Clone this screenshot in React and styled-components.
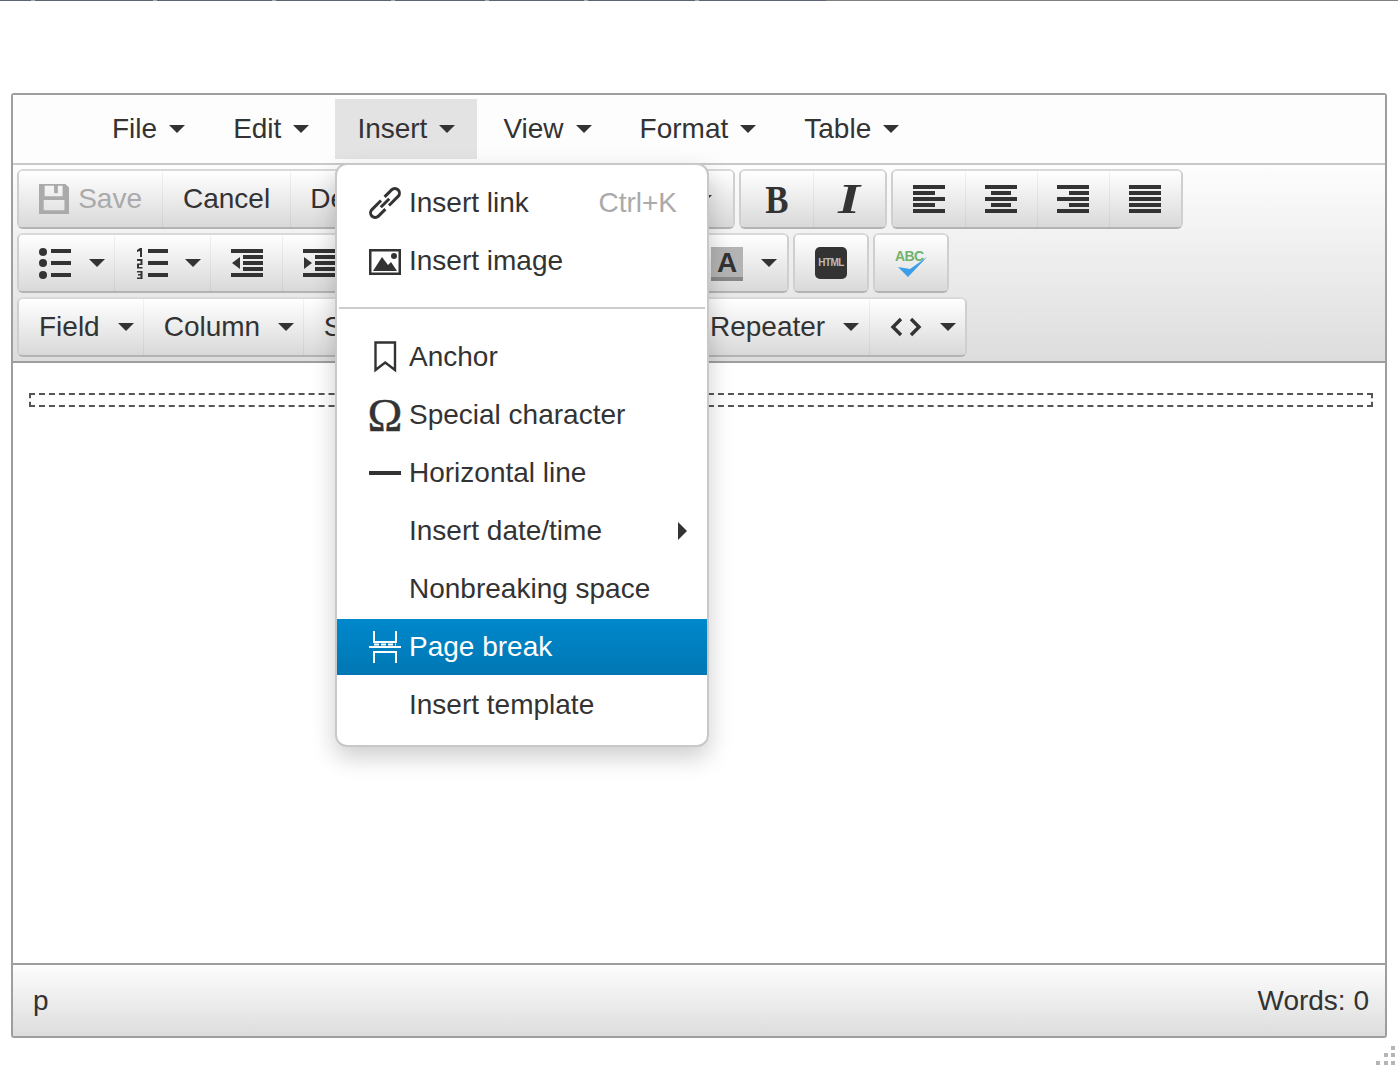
import React from "react";
import styled, { createGlobalStyle } from "styled-components";

const GlobalStyle = createGlobalStyle`
html, body {
  margin: 0;
  height: 100%;
  overflow: hidden;
  background: #fff;
}
body {
  font-family: "Liberation Sans", Arial, sans-serif;
  color: #333;
}
`;

const TopLine = styled.div`
height: 1px;
background: linear-gradient(
  to right,
  #5b6573 31px, #a9adb3 31px, #a9adb3 35px,
  #5b6573 35px, #5b6573 153px, #a9adb3 153px, #a9adb3 157px,
  #5b6573 157px, #5b6573 272px, #a9adb3 272px, #a9adb3 276px,
  #5b6573 276px, #5b6573 391px, #a9adb3 391px, #a9adb3 395px,
  #5b6573 395px, #5b6573 485px, #a9adb3 485px, #a9adb3 489px,
  #5b6573 489px, #5b6573 584px, #a9adb3 584px, #a9adb3 588px,
  #5b6573 588px, #5b6573 695px, #a9adb3 695px, #a9adb3 699px,
  #5b6573 699px, #5b6573 826px, #80807c 826px
);
`;

const Page = styled.div`
padding: 92px 11px 0;
`;

const Editor = styled.div`
position: relative;
display: flex;
flex-direction: column;
width: 1376px;
height: 945px;
box-sizing: border-box;
border: 2px solid #9e9e9e;
border-radius: 3px;
font-size: 28px;
line-height: 32px;
`;

const MenuBar = styled.div`
display: flex;
gap: 4px;
height: 60px;
padding: 4px 0 4px 77px;
background: #fdfdfd;
border-bottom: 2px solid #c9c9c9;
`;

const MenuButton = styled.div`
display: flex;
align-items: center;
gap: 12px;
padding: 0 22px;
background: ${(p) => (p.$active ? "#e3e3e3" : "transparent")};
`;

const Caret = styled.span`
flex: none;
width: 0;
height: 0;
border-style: solid;
border-width: 8px 8px 0;
border-color: #333 transparent transparent;
`;

const Toolbar = styled.div`
display: flex;
flex-direction: column;
gap: 4px;
height: 188px;
padding: 4px;
background: linear-gradient(to bottom, #fdfdfd, #dddddd);
border-bottom: 2px solid #9e9e9e;
`;

const Row = styled.div`
display: flex;
gap: 4px;
height: 60px;
`;

const Group = styled.div`
display: flex;
box-sizing: border-box;
width: ${(p) => (p.$width ? `${p.$width}px` : "auto")};
height: 60px;
border: 2px solid;
border-color: #d9d9d9 #cfcfcf #b3b3b3;
border-radius: 6px;
overflow: hidden;
`;

const Btn = styled.div`
display: flex;
flex: ${(p) => (p.$fill ? "1" : "none")};
align-items: center;
justify-content: ${(p) => (p.$fill ? "space-between" : "flex-start")};
box-sizing: border-box;
width: ${(p) => (p.$width ? `${p.$width}px` : "auto")};
padding-left: ${(p) => p.$left ?? 20}px;
padding-right: ${(p) => p.$right ?? (p.$drop ? 9 : 20)}px;
gap: ${(p) => (p.$drop ? "18px" : "9px")};
color: ${(p) => (p.$disabled ? "#aaa" : "#333")};
background: linear-gradient(to bottom, #ffffff, #d9d9d9);
box-shadow: inset 1px 0 0 rgba(0, 0, 0, 0.05);
&:first-child {
  box-shadow: none;
}
`;

const BoldGlyph = styled.span`
display: block;
width: 32px;
text-align: center;
font-family: "Liberation Serif", serif;
font-weight: bold;
font-style: ${(p) => (p.$italic ? "italic" : "normal")};
font-size: ${(p) => (p.$italic ? "42px" : "41px")};
line-height: 32px;
transform: ${(p) => (p.$italic ? "scaleX(1.35)" : "scaleX(0.85)")};
`;

const ColorA = styled.span`
display: block;
box-sizing: border-box;
width: 32px;
height: 34px;
margin-top: 2px;
background: #b3b3b3;
border-bottom: 4px solid #888;
text-align: center;
font-weight: bold;
font-size: 28px;
line-height: 32px;
`;

const HtmlBadge = styled.span`
display: flex;
align-items: center;
justify-content: center;
width: 32px;
height: 32px;
background: #333;
border-radius: 5px;
color: #bbb;
font-size: 10px;
font-weight: bold;
letter-spacing: -0.6px;
`;

const SpellIcon = styled.span`
position: relative;
display: block;
width: 32px;
height: 32px;
color: #6fb36f;
font-size: 14px;
font-weight: bold;
line-height: 18px;
letter-spacing: -0.6px;
svg {
  position: absolute;
  left: 0;
  top: 0;
}
`;

const Content = styled.div`
height: 570px;
padding: 30px 12px 0 16px;
background: #fff;
`;

const PageBreakBox = styled.div`
height: 10px;
border: 2px dashed #555;
`;

const StatusBar = styled.div`
display: flex;
align-items: center;
justify-content: space-between;
height: 71px;
padding: 0 16px 0 20px;
background: linear-gradient(to bottom, #fdfdfd, #dddddd);
border-top: 2px solid #9e9e9e;
`;

const Grip = styled.svg`
position: absolute;
right: -11px;
bottom: -29px;
`;

const Dropdown = styled.div`
position: absolute;
left: 322px;
top: 68px;
box-sizing: border-box;
width: 374px;
height: 584px;
padding: 10px 0 12px;
background: #fff;
border: 2px solid #c8c8c8;
border-radius: 12px;
box-shadow: 0 10px 24px rgba(0, 0, 0, 0.2);
`;

const MenuItem = styled.div`
display: flex;
align-items: center;
gap: 8px;
height: 56px;
margin-bottom: 2px;
padding: 0 20px 0 32px;
color: ${(p) => (p.$active ? "#fff" : "#333")};
background: ${(p) =>
    p.$active ? "linear-gradient(to bottom, #0088cc, #0077b3)" : "transparent"};
`;

const ItemIcon = styled.span`
display: flex;
flex: none;
align-items: center;
justify-content: center;
width: 32px;
height: 32px;
`;

const Omega = styled.span`
font-family: "Liberation Serif", serif;
font-size: 47px;
line-height: 32px;
-webkit-text-stroke: 0.4px #333;
`;

const Shortcut = styled.span`
margin-left: auto;
padding-right: 10px;
color: #aaa;
`;

const SubArrow = styled.span`
margin-left: auto;
width: 0;
height: 0;
border-style: solid;
border-width: 9px 0 9px 9px;
border-color: transparent transparent transparent #333;
`;

const Divider = styled.div`
height: 2px;
margin: 18px 2px 20px;
background: #cccccc;
`;

const Svg = ({ children, color = "#333" }) => (
    <svg width="32" height="32" viewBox="0 0 32 32" fill={color}>
        {children}
    </svg>
);

const lines = (rows) =>
    rows.map(([x, y, w], i) => <rect key={i} x={x} y={y} width={w} height="4" />);

const SaveIcon = () => (
    <Svg color="#aaa">
        <path fillRule="evenodd" d="M0 0H28L32 4V32H0ZM6 2V13H25V2H20V10H16V2ZM5 17V28H27V17Z" />
    </Svg>
);

const BulletIcon = () => (
    <Svg>
        <circle cx="4" cy="5" r="4" />
        <circle cx="4" cy="16" r="4" />
        <circle cx="4" cy="28" r="4" />
        {lines([[12, 2, 20], [12, 14, 20], [12, 26, 20]])}
    </Svg>
);

const NumberIcon = () => (
    <svg width="32" height="32" viewBox="-1 0 32 32" fill="#333" style={{ overflow: "visible" }}>
        <path d="M1 3L4 1H6V10H4V4L1 5Z" />
        <path d="M1 12H6.5V18H3V20H6.5V21.5H1V16.5H4.5V14H1Z" />
        <path d="M1 24H6.5V32H1V30.5H4.5V28.5H2V27H4.5V25.5H1Z" />
        {lines([[12, 2, 20], [12, 14, 20], [12, 26, 20]])}
    </svg>
);

const OutdentIcon = () => (
    <Svg>
        <path d="M1 16L9 10V22Z" />
        {lines([[0, 2, 32], [12, 8, 20], [12, 14, 20], [12, 20, 20], [0, 26, 32]])}
    </Svg>
);

const IndentIcon = () => (
    <Svg>
        <path d="M9 16L1 10V22Z" />
        {lines([[0, 2, 32], [12, 8, 20], [12, 14, 20], [12, 20, 20], [0, 26, 32]])}
    </Svg>
);

const AlignIcon = ({ short }) => (
    <Svg>
        {lines([[0, 2, 32], [short[0], 8, short[1]], [0, 14, 32], [short[0], 20, short[1]], [0, 26, 32]])}
    </Svg>
);

const CodeIcon = () => (
    <svg width="32" height="32" viewBox="0 0 32 32" fill="none" stroke="#333" strokeWidth="3.4">
        <path d="M11 8L3 16L11 24M21 8L29 16L21 24" />
    </svg>
);

const CheckIcon = () => (
    <svg width="32" height="32" viewBox="0 0 32 32">
        <path d="M3 20L15 22L32 10L13 30Z" fill="#3b9ee8" />
    </svg>
);

const LinkIcon = () => (
    <svg width="32" height="32" viewBox="0 0 32 32" fill="none" stroke="#333" strokeWidth="3">
        <g transform="rotate(-45 16 16)">
            <path d="M15 11.4H2.1A4.6 4.6 0 0 0 2.1 20.6H12" />
            <path d="M17 20.6H29.9A4.6 4.6 0 0 0 29.9 11.4H20" />
            <path d="M10 16H22" />
        </g>
    </svg>
);

const ImageIcon = () => (
    <Svg>
        <path fillRule="evenodd" d="M0 4H32V30H0ZM2.5 6.5V27.5H29.5V6.5Z" />
        <path d="M4 26L13 12L19 20L22 17L28 26Z" />
        <circle cx="25" cy="11" r="3" />
    </Svg>
);

const AnchorIcon = () => (
    <svg width="32" height="32" viewBox="0 0 32 32" fill="none" stroke="#333" strokeWidth="2.4">
        <path d="M6.5 1.5H26V29L16.2 21.5L6.5 29Z" />
    </svg>
);

const RuleIcon = () => (
    <Svg>
        <rect x="0" y="14" width="32" height="4" />
    </Svg>
);

const PageBreakIcon = () => (
    <svg width="32" height="32" viewBox="0 0 32 32" fill="none" stroke="#fff" strokeWidth="2">
        <path d="M5 0V11H27V0M0 16H32M5 32V21H27V32" />
        <path d="M5 13.5H27" strokeDasharray="5 2" />
    </svg>
);

const GripIcon = () => (
    <Grip width="22" height="22" viewBox="0 0 22 22" fill="#b5b5b5">
        <rect x="17" y="3" width="4" height="4" />
        <rect x="10" y="10" width="4" height="4" />
        <rect x="17" y="10" width="4" height="4" />
        <rect x="2" y="18" width="4" height="4" />
        <rect x="10" y="18" width="4" height="4" />
        <rect x="17" y="18" width="4" height="4" />
    </Grip>
);

const App = () => {
    const menus = ["File", "Edit", "Insert", "View", "Format", "Table"];

    return (
        <>
            <GlobalStyle />
            <TopLine />
            <Page>
                <Editor>
                    <MenuBar>
                        {menus.map((name) => (
                            <MenuButton key={name} $active={name === "Insert"}>
                                {name}
                                <Caret />
                            </MenuButton>
                        ))}
                    </MenuBar>

                    <Toolbar>
                        <Row>
                            <Group $width={718}>
                                <Btn $disabled $width={143}><SaveIcon />Save</Btn>
                                <Btn $left={21}>Cancel</Btn>
                                <Btn>Delete</Btn>
                                <Btn $drop $fill $right={21}><span /><Caret /></Btn>
                            </Group>
                            <Group>
                                <Btn><BoldGlyph>B</BoldGlyph></Btn>
                                <Btn><BoldGlyph $italic>I</BoldGlyph></Btn>
                            </Group>
                            <Group>
                                <Btn><AlignIcon short={[0, 22]} /></Btn>
                                <Btn><AlignIcon short={[6, 20]} /></Btn>
                                <Btn><AlignIcon short={[12, 20]} /></Btn>
                                <Btn><AlignIcon short={[0, 32]} /></Btn>
                            </Group>
                        </Row>
                        <Row>
                            <Group $width={772}>
                                <Btn $drop><BulletIcon /><Caret /></Btn>
                                <Btn $drop $width={96} $left={21}><NumberIcon /><Caret /></Btn>
                                <Btn $left={21} $right={19}><OutdentIcon /></Btn>
                                <Btn $left={21} $right={19}><IndentIcon /></Btn>
                                <Btn $fill />
                                <Btn $drop $width={96}><ColorA>A</ColorA><Caret /></Btn>
                            </Group>
                            <Group>
                                <Btn><HtmlBadge>HTML</HtmlBadge></Btn>
                            </Group>
                            <Group>
                                <Btn><SpellIcon>ABC<CheckIcon /></SpellIcon></Btn>
                            </Group>
                        </Row>
                        <Row>
                            <Group $width={950}>
                                <Btn $drop>Field<Caret /></Btn>
                                <Btn $drop $width={160} $left={21}>Column<Caret /></Btn>
                                <Btn $drop $fill $left={21}>Section<Caret /></Btn>
                                <Btn $drop $width={179}>Repeater<Caret /></Btn>
                                <Btn $drop $width={96} $left={21}><CodeIcon /><Caret /></Btn>
                            </Group>
                        </Row>
                    </Toolbar>

                    <Content>
                        <PageBreakBox />
                    </Content>

                    <StatusBar>
                        <span>p</span>
                        <span>Words: 0</span>
                    </StatusBar>

                    <GripIcon />

                    <Dropdown>
                        <MenuItem>
                            <ItemIcon><LinkIcon /></ItemIcon>
                            Insert link
                            <Shortcut>Ctrl+K</Shortcut>
                        </MenuItem>
                        <MenuItem>
                            <ItemIcon><ImageIcon /></ItemIcon>
                            Insert image
                        </MenuItem>
                        <Divider />
                        <MenuItem>
                            <ItemIcon><AnchorIcon /></ItemIcon>
                            Anchor
                        </MenuItem>
                        <MenuItem>
                            <ItemIcon><Omega>Ω</Omega></ItemIcon>
                            Special character
                        </MenuItem>
                        <MenuItem>
                            <ItemIcon><RuleIcon /></ItemIcon>
                            Horizontal line
                        </MenuItem>
                        <MenuItem>
                            <ItemIcon />
                            Insert date/time
                            <SubArrow />
                        </MenuItem>
                        <MenuItem>
                            <ItemIcon />
                            Nonbreaking space
                        </MenuItem>
                        <MenuItem $active>
                            <ItemIcon><PageBreakIcon /></ItemIcon>
                            Page break
                        </MenuItem>
                        <MenuItem>
                            <ItemIcon />
                            Insert template
                        </MenuItem>
                    </Dropdown>
                </Editor>
            </Page>
        </>
    );
};

export default App;
